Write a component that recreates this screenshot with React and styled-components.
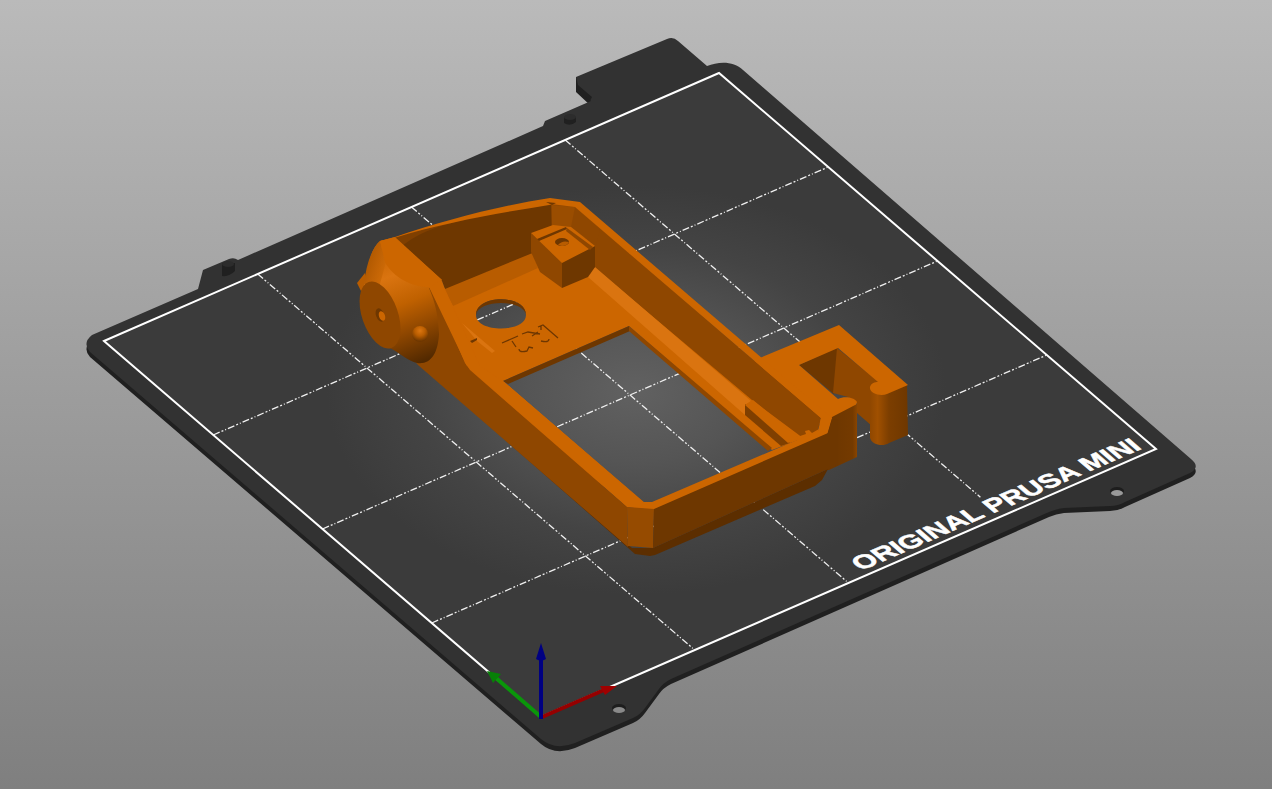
import styled, { createGlobalStyle } from "styled-components";

const GlobalStyle = createGlobalStyle`
  body {
    margin: 0;
    background: #818181;
  }
`;

const Viewport = styled.main`
  width: 100%;
  height: 100vh;
  overflow: hidden;
  background: linear-gradient(#bababa, #7f7f7f);
`;

const Scene = styled.svg`
  display: block;
  width: 100%;
  height: 100%;
`;

const Outline = styled.path`
  fill: none;
  stroke: #ffffff;
  stroke-width: 2px;
`;

const GridLine = styled.line`
  stroke: #f0f0f0;
  stroke-width: 1.3px;
  stroke-dasharray: 7 2 2 2 1 2;
`;

const BedText = styled.text`
  fill: #ffffff;
  stroke: #ffffff;
  stroke-width: 0.6px;
  font-family: "Liberation Sans", Arial, sans-serif;
  font-size: 24px;
  font-weight: 700;
`;

const Face = styled.path`
  fill: ${(props) => props.$color};
`;

const Engraving = styled.path`
  fill: none;
  stroke: #6e3700;
  stroke-width: 1.3px;
`;

const Axis = styled.line`
  stroke: ${(props) => props.$color};
  stroke-width: 4px;
`;

const orange = "#cc6600";
const bright = "#da7410";
const mid = "#b85c00";
const side = "#8f4700";
const dark = "#6e3700";
const under = "#5c2e00";

// print area corners
const bed = {
  left: [104, 341],
  top: [719, 73],
  right: [1156, 449],
  bottom: [541, 717],
};

const sheet =
  "M92 335 L198 289 L203 270 L229 259 Q234 257 238 260 L543 126 L545 121 L591 101 L576 87 V77 L667 39 Q673 36 678 41 L707 66 C719 61 734 61 743 70 L1191 459 Q1201 467 1190 473 L1125 502 Q1118 506 1110 506 L1064 508 Q1056 509 1049 512 L671 679 Q663 683 659 689 L645 708 Q640 715 633 718 L575 743 Q555 751 541 739 L90 352 Q82 343 92 335 Z";

const mix = (a, b, t) => [a[0] + (b[0] - a[0]) * t, a[1] + (b[1] - a[1]) * t];

const steps = [0.25, 0.5, 0.75];

const Defs = () => (
  <defs>
    <radialGradient
      id="glow"
      gradientUnits="userSpaceOnUse"
      cx="0"
      cy="0"
      r="310"
      gradientTransform="translate(636 390) scale(1 .66)"
    >
      <stop offset="0" stopColor="#616161" />
      <stop offset=".35" stopColor="#555555" />
      <stop offset=".7" stopColor="#444444" />
      <stop offset="1" stopColor="#3b3b3b" />
    </radialGradient>
    <linearGradient id="cone" gradientUnits="userSpaceOnUse" x1="382" y1="258" x2="424" y2="362">
      <stop offset="0" stopColor="#cb6703" />
      <stop offset=".18" stopColor="#da7410" />
      <stop offset=".45" stopColor="#c06100" />
      <stop offset=".7" stopColor="#8f4700" />
      <stop offset="1" stopColor="#502800" />
    </linearGradient>
    <linearGradient id="coneTop" gradientUnits="userSpaceOnUse" x1="364" y1="262" x2="388" y2="270">
      <stop offset="0" stopColor="#ac5600" />
      <stop offset="1" stopColor="#d26d08" />
    </linearGradient>
    <radialGradient id="nub" cx=".5" cy=".3" r=".65">
      <stop offset="0" stopColor="#dc7610" />
      <stop offset=".5" stopColor="#b95d00" />
      <stop offset="1" stopColor="#6e3700" />
    </radialGradient>
    <linearGradient id="post">
      <stop offset="0" stopColor="#8f4700" />
      <stop offset=".2" stopColor="#a05000" />
      <stop offset=".5" stopColor="#7c3e00" />
      <stop offset="1" stopColor="#6e3700" />
    </linearGradient>
    <linearGradient id="hook" gradientUnits="userSpaceOnUse" x1="835" y1="0" x2="857" y2="0">
      <stop offset="0" stopColor="#6e3700" />
      <stop offset=".8" stopColor="#743a00" />
      <stop offset="1" stopColor="#8a4500" />
    </linearGradient>
  </defs>
);

const Sheet = () => (
  <g>
    <path d={sheet} fill="#202020" transform="translate(0 5)" />
    <path d={sheet} fill="#323232" />
    <path d="M576 77 V88 L590 101 L592 97 L578 85 Z" fill="#202020" />
    <path d="M222 263 V276 Q229 277 235 271 V263 Z" fill="#202020" />
    <ellipse cx="228" cy="264" rx="6" ry="3" fill="#2c2c2c" />
    <path d="M564 117 V123 Q570 127 576 122 V117 Z" fill="#202020" />
    <ellipse cx="570" cy="117" rx="6" ry="3" fill="#2c2c2c" />
    <ellipse cx="619" cy="708" rx="7" ry="4" fill="#1d1d1d" />
    <ellipse cx="619" cy="710" rx="6" ry="3" fill="#8a8a8a" />
    <ellipse cx="1117" cy="491" rx="7" ry="4" fill="#1d1d1d" />
    <ellipse cx="1117" cy="493" rx="6" ry="3" fill="#999999" />
  </g>
);

const Bed = () => {
  const d = `M${bed.left} L${bed.top} L${bed.right} L${bed.bottom} Z`;
  return (
    <g>
      <path d={d} fill="url(#glow)" />
      {steps.map((t) => {
        const a = mix(bed.left, bed.top, t);
        // the third line stops short of the printed name
        const b = mix(a, mix(bed.bottom, bed.right, t), t === 0.75 ? 0.95 : 1);
        return <GridLine key={t} x1={a[0]} y1={a[1]} x2={b[0]} y2={b[1]} />;
      })}
      {steps.map((t) => {
        const a = mix(bed.left, bed.bottom, t);
        const b = mix(bed.top, bed.right, t);
        return <GridLine key={t} x1={a[0]} y1={a[1]} x2={b[0]} y2={b[1]} />;
      })}
      <Outline d={d} />
      <BedText transform="matrix(1.068 -.465 .759 .653 861 571)">
        ORIGINAL PRUSA MINI
      </BedText>
    </g>
  );
};

const Clip = () => (
  <g>
    <Face $color={dark} d="M799 365 L838 347 L834 394 Z" />
    <Face $color={side} d="M837 348 L880 383 L872 426 L857 413 V403 L848 397 L833 393 Z" />
    <path
      d="M870 388 V438 C872 445 883 447 889 443 L908 435 L907 385 L885 394 Z"
      fill="url(#post)"
    />
    <Face
      $color={orange}
      d="M755 360 L839 325 L908 385 L887 394 C880 397 869 393 870 387 C871 383 875 382 878 382 L838 348 L799 365 L838 399 C844 396 854 397 857 402 L856 406 L832 419 L818 424 L745 372 Z"
    />
    <path
      d="M832 417 L857 404 V457 L829 470 L815 470 L827 434 Z"
      fill="url(#hook)"
    />
  </g>
);

const Tray = () => (
  <g>
    {/* floor, with the display window and the round hole cut out */}
    <path
      fill={orange}
      fillRule="evenodd"
      d="M440 290 L545 250 L600 268 L806 437 L772 450 L629 326 L503 381 L645 503 L636 509 L440 372 Z M476 315 C476 294 526 294 526 315 C526 333 476 333 476 315 Z"
    />
    <path d="M476 315 C476 294 526 294 526 315 C524 299 478 299 476 315 Z" fill={dark} />
    <Face $color={dark} d="M503 381 L629 326 L630 331 L508 384 Z" />
    <Face $color={side} d="M629 326 L772 448 L768 451 L629 331 Z" />

    {/* inner walls */}
    <Face $color={mid} d="M444 289 L532 252 L538 268 L453 306 Z" />
    <Face
      $color={dark}
      d="M394 238 L404 234 C450 221 500 212 552 203 V245 L445 289 L442 281 Z"
    />
    <Face $color={side} d="M551 203 L575 206 L821 418 L817 434 L803 438 L752 400 L595 268 L552 240 Z" />
    <Face $color="#7f3f00" d="M394 238 L404 234 C430 226 450 222 485 216 C440 224 419 232 401 247 Z" />
    <Face $color="#9a4d00" d="M552 205 L575 207 L597 226 L590 240 L552 225 Z" />
    <Face $color={side} d="M575 207 L600 229 L596 246 L571 227 Z" />
    <Face $color={bright} d="M595 267 L751 401 L745 405 V415 L588 277 Z" />

    {/* ledge at the far end */}
    <Face $color="#7f3f00" d="M745 404 L790 443 L781 446 L745 415 Z" />
    <Face $color={orange} d="M745 405 L753 400 L799 438 L788 443 Z" />
    <Face $color={orange} d="M797 437 L806 434 L805 431 L809 430 L812 433 L819 429 L815 440 L798 444 Z" />

    {/* rims */}
    <Face
      $color={orange}
      d="M380 241 L395 237 C445 220 498 206 550 198 L580 202 L763 359 L832 418 L827 435 L654 510 L627 507 L465 364 L440 290 L442 281 L394 238 C450 221 500 213 555 204 L551 204 L575 207 L821 418 L818 431 L652 502 L643 502 L503 381 L640 508 L640 508 L463 364 L380 250 Z"
      fillRule="evenodd"
    />
    <Face $color={orange} d="M442 281 L445 289 L480 366 L503 381 L643 502 L640 508 L627 507 L465 365 L434 287 Z" />
    <Face $color={dark} d="M546 202 L556 203 L552 205 Z" />
  </g>
);

const OuterWalls = () => (
  <g>
    <Face $color={under} d="M415 361 L632 548 L653 548 L828 469 L822 480 L815 486 L655 555 L650 556 L635 554 Z" />
    <Face $color={side} d="M429 287 L438 300 L465 363 L470 370 L627 507 L628 547 L418 365 L405 350 Z" />
    <Face $color="#964b00" d="M627 507 L654 509 L653 548 L628 546 Z" />
    <Face $color={dark} d="M654 509 L828 433 L832 419 L838 420 V465 L828 469 L653 548 Z" />
  </g>
);

const Hinge = () => (
  <g>
    <Face $color={mid} d="M365 273 L357 283 L361 291 L368 288 Z" />
    <path
      d="M380 241 L395 238 L442 280 L429 288 C435 302 438 314 439 334 C438 353 431 365 417 363 C408 361 400 353 390 348 L362 300 C366 275 369 250 380 241 Z"
      fill="url(#cone)"
    />
    <path d="M380 241 C371 249 366 266 364 284 L380 284 L386 262 Z" fill="url(#coneTop)" />
    <Face $color={orange} d="M380 241 L395 237 L442 280 L432 287 C412 288 393 277 385 262 Z" />
    <Face $color={orange} d="M429 287 L441 280 L444 289 L480 366 L467 366 Z" />
    <ellipse cx="380" cy="315" rx="18" ry="35" transform="rotate(-19 380 315)" fill={side} />
    <ellipse cx="380" cy="315" rx="4" ry="7" transform="rotate(-19 380 315)" fill={dark} />
    <ellipse cx="382" cy="316" rx="3" ry="5" transform="rotate(-19 382 316)" fill={orange} />
    <circle cx="420" cy="334" r="8" fill="url(#nub)" />
  </g>
);

const ScrewPost = () => (
  <g>
    <Face $color={side} d="M531 233 L562 262 V288 L540 272 L531 252 Z" />
    <Face $color={dark} d="M562 262 L595 246 V267 L588 277 L562 288 Z" />
    <Face $color={orange} d="M531 233 L553 225 L571 227 L595 246 L562 263 Z" />
    <Face $color={dark} d="M537 239 L566 227 L567 229 L539 241 Z" />
    <Face $color={side} d="M567 228 L593 247 L590 250 L566 231 Z" />
    <ellipse cx="562" cy="242" rx="7" ry="4" fill={dark} />
    <path d="M558 245 Q562 240 569 242 Q567 246 562 246 Z" fill={mid} />
  </g>
);

const Details = () => (
  <g>
    <Face $color={bright} d="M462 323 L495 351 L492 353 L477 341 Z" />
    <Face $color={dark} d="M470 341 L477 338 L477 340 L472 343 Z" />
    <Engraving d="M502 343 L518 336 M512 341 L516 347 M519 349 Q519 353 527 351 L529 347 L533 348 M522 334 L528 332 L540 334 M532 336 L538 332 M541 341 Q549 343 549 339 M538 327 L543 325 L558 338 M541 326 V330" />
  </g>
);

const Axes = () => (
  <g>
    <Axis $color="#950000" x1="542" y1="717" x2="604" y2="690" />
    <path d="M600 686 L617 686 L605 695 Z" fill="#a00000" />
    <Axis $color="#0a960a" x1="541" y1="717" x2="496" y2="678" />
    <path d="M487 671 L501 674 L493 683 Z" fill="#078007" />
    <Axis $color="#000082" x1="541" y1="719" x2="541" y2="658" />
    <path d="M541 643 L546 659 Q541 662 536 659 Z" fill="#000082" />
  </g>
);

const App = () => {
  return (
    <>
      <GlobalStyle />
      <Viewport>
        <Scene viewBox="0 0 1272 789" preserveAspectRatio="xMidYMid meet" role="img" aria-label="Print bed">
          <Defs />
          <Sheet />
          <Bed />
          <Clip />
          <Tray />
          <OuterWalls />
          <Hinge />
          <ScrewPost />
          <Details />
          <Axes />
        </Scene>
      </Viewport>
    </>
  );
};

export default App;
